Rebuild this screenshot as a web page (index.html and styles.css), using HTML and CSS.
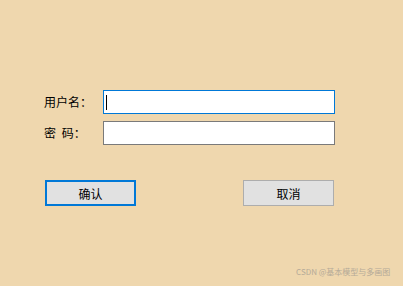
FILE: index.html
```html
<!DOCTYPE html>
<html lang="zh">
<head>
<meta charset="utf-8">
<link rel="stylesheet" href="styles.css">
</head>
<body>
<div class="form">
  <div class="row">
    <span class="label">用户名：</span>
    <div class="field focused"><span class="caret"></span></div>
  </div>
  <div class="row">
    <span class="label spaced">密 码：</span>
    <div class="field"></div>
  </div>
  <div class="buttons">
    <div class="btn primary">确认</div>
    <div class="btn">取消</div>
  </div>
</div>
<div class="watermark">CSDN @基本模型与多画图</div>
</body>
</html>
```
FILE: styles.css
```css
html, body {
  margin: 0;
  padding: 0;
}
body {
  width: 403px;
  height: 286px;
  background: #efd7ae;
  font-family: "Noto Sans CJK SC", "Noto Sans", sans-serif;
  font-size: 12px;
  color: #000;
  position: relative;
  overflow: hidden;
}
.form {
  padding: 90px 0 0 44px;
  display: flex;
  flex-direction: column;
  width: 291px;
}
.row {
  display: flex;
  align-items: center;
  height: 24px;
  margin-bottom: 7px;
}
.label {
  width: 59px;
  line-height: 24px;
  white-space: pre;
}
.spaced {
  word-spacing: 3px;
}
.field {
  box-sizing: border-box;
  width: 232px;
  height: 24px;
  background: #fff;
  border: 1px solid #7a7a7a;
  display: flex;
  align-items: center;
  padding-left: 2px;
}
.field.focused {
  border-color: #0078d7;
}
.caret {
  display: block;
  width: 1px;
  height: 15px;
  background: #000;
}
.buttons {
  display: flex;
  justify-content: space-between;
  margin-top: 28px;
  padding: 0 1px;
}
.btn {
  box-sizing: border-box;
  width: 91px;
  height: 26px;
  background: #e1e1e1;
  border: 1px solid #adadad;
  display: flex;
  align-items: center;
  justify-content: center;
  font-size: 12px;
}
.btn.primary {
  border: 2px solid #0078d7;
}
.watermark {
  position: absolute;
  left: 296px;
  top: 265px;
  font-size: 8px;
  color: #b5aa98;
  white-space: nowrap;
  line-height: 14px;
}
```
